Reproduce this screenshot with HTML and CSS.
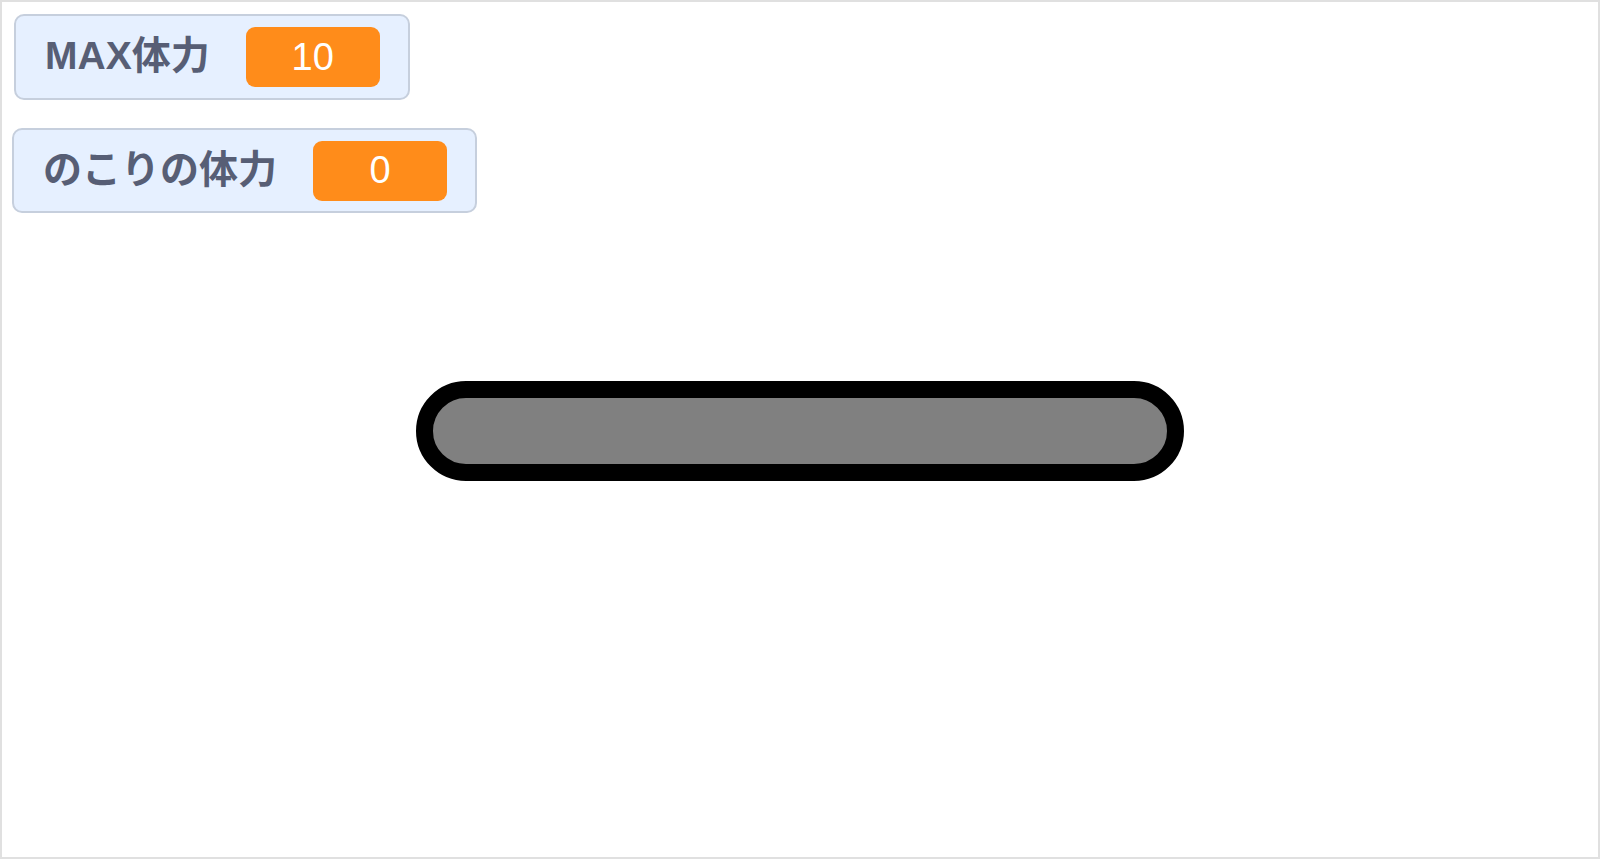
FILE: index.html
```html
<!DOCTYPE html>
<html lang="ja">
<head>
<meta charset="utf-8">
<title>体力ゲージ</title>
<link rel="stylesheet" href="styles.css">
</head>
<body>
<div class="stage">
  <div class="monitor monitor-max">
    <span class="monitor-label">MAX体力</span>
    <span class="monitor-value">10</span>
  </div>
  <div class="monitor monitor-left">
    <span class="monitor-label">のこりの体力</span>
    <span class="monitor-value">0</span>
  </div>
  <div class="gauge"></div>
</div>
</body>
</html>
```
FILE: styles.css
```css
html, body {
  margin: 0;
  padding: 0;
  background: #ffffff;
}

.stage {
  position: relative;
  box-sizing: border-box;
  width: 1600px;
  height: 859px;
  border: 2px solid #e0e0e0;
  background: #ffffff;
  display: flex;
  align-items: center;
  justify-content: center;
  overflow: hidden;
}

/* variable monitors float over the stage */
.monitor {
  position: absolute;
  display: flex;
  align-items: center;
  gap: 36px;
  box-sizing: border-box;
  height: 86px;
  padding: 0 28px 0 29px;
  border: 2px solid #c6cfdd;
  border-radius: 10px;
  background: #e6f0ff;
}

.monitor-max {
  left: 12px;
  top: 12px;
}

.monitor-left {
  left: 10px;
  top: 126px;
  height: 85px;
}

.monitor-label {
  font-family: "Liberation Sans", "Noto Sans CJK JP", sans-serif;
  font-weight: bold;
  font-size: 39px;
  line-height: 1;
  margin-bottom: 3px;
  color: #575e75;
  white-space: nowrap;
}

.monitor-value {
  display: flex;
  align-items: center;
  justify-content: center;
  width: 134px;
  height: 60px;
  border-radius: 9px;
  background: #ff8c1a;
  color: #ffffff;
  font-family: "Liberation Sans", sans-serif;
  font-size: 38px;
}

/* health bar sprite */
.gauge {
  box-sizing: border-box;
  width: 768px;
  height: 100px;
  margin-top: 3px;
  border: 17px solid #000000;
  border-radius: 50px;
  background: #808080;
}
```
